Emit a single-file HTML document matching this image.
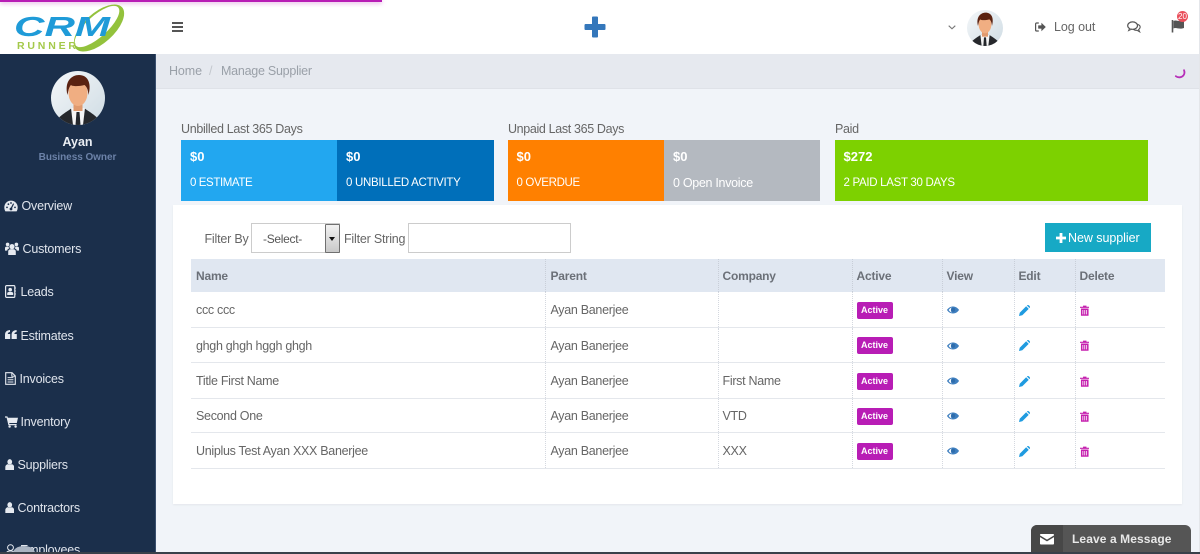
<!DOCTYPE html>
<html><head><meta charset="utf-8"><title>Manage Supplier</title>
<style>
*{box-sizing:border-box}
html,body{margin:0;padding:0;width:1200px;height:554px;overflow:hidden;background:#f1f4f9;font-family:"Liberation Sans",sans-serif;font-size:13px;color:#666}
.a{position:absolute}
.t{position:absolute;white-space:nowrap;line-height:16px}
#top{left:0;top:0;width:1200px;height:54px;background:#fff}
#prog{left:0;top:0;width:382px;height:2px;background:#b81db5;box-shadow:0 1px 4px rgba(184,29,181,.5)}
#side{left:0;top:54px;width:156px;height:498px;background:#1b2f4b;border-right:1px solid #3a4f6e;overflow:hidden}
#crumb{left:156px;top:54px;width:1044px;height:35px;background:#e6e9ef;border-bottom:1px solid #dfe2e8}
.nav{color:#dfe4ec;font-size:12.5px;letter-spacing:-.2px}
.lb{font-size:12.5px;letter-spacing:-.32px}
.k{position:absolute;top:140px;height:61px;color:#fff}
.k b{position:absolute;left:9px;top:9px;font-size:13px;line-height:16px}
.k span{position:absolute;left:9px;top:35px;font-size:11.5px;letter-spacing:-.3px;line-height:16px;white-space:nowrap}
#panel{left:173px;top:205px;width:1009px;height:299px;background:#fff;box-shadow:0 1px 2px rgba(0,0,0,.06)}
table{position:absolute;left:191px;top:259px;width:974px;border-collapse:collapse;table-layout:fixed;font-size:12.5px;letter-spacing:-.3px;color:#666}
th{height:33px;background:#e0e7f1;text-align:left;padding:0 4px;font-size:12px;letter-spacing:-.2px;color:#6b7078;border-left:1px dotted #c8ced8}
td{padding:2px 4px 0;border-bottom:1px solid #e4e7ec;border-left:1px dotted #d4d8df;white-space:nowrap}
th:nth-child(-n+2),td:nth-child(-n+2){padding-left:5px}
th:first-child,td:first-child{border-left:0}
.bd{display:block;width:36px;height:17px;line-height:17px;background:#b81db5;color:#fff;font-size:9px;letter-spacing:0;font-weight:bold;text-align:center;border-radius:2px}
td svg{display:block}
</style></head><body>
<svg width="0" height="0" style="position:absolute"><defs>
<clipPath id="c"><circle cx="27" cy="27" r="27"/></clipPath>
<linearGradient id="bg" x1="0" y1="0" x2="1" y2="1"><stop offset="0" stop-color="#f4f7f9"/><stop offset="1" stop-color="#cfdce4"/></linearGradient>
<symbol id="av" viewBox="0 0 54 54"><g clip-path="url(#c)">
<rect width="54" height="54" fill="url(#bg)"/>
<path d="M3 54 C6 46 14 42 21 37 L33 37 C40 42 48 46 51 54Z" fill="#26282c"/>
<path d="M20 37 L34 37 L32 54 L22 54Z" fill="#f5f5f5"/>
<path d="M25.5 41 L28.5 41 L29.5 54 L24.5 54Z" fill="#23262b"/>
<rect x="22.5" y="29" width="9" height="11" fill="#e09a6e"/>
<ellipse cx="27" cy="22" rx="9.5" ry="13" fill="#f0ae82"/>
<path d="M16.5 24 C13 10 21 4 28 4 C36 4 41 11 37.5 24 C37 18 35.5 15.5 33.5 14 C28 15.5 21 15.5 20 14 C18 16 17.5 19 16.5 24Z" fill="#5a2211"/>
</g></symbol>
<symbol id="user" viewBox="0 0 12 12" preserveAspectRatio="none"><circle cx="6" cy="3.2" r="3" fill="currentColor"/><path d="M.4 12V8.6C.4 7 2 6 3.6 5.6 4.4 6.5 7.6 6.5 8.4 5.6 10 6 11.6 7 11.6 8.6V12Z" fill="currentColor"/></symbol>
<symbol id="eye" viewBox="0 0 12 8"><path d="M0 4C2.8-.6 9.2-.6 12 4 9.2 8.6 2.8 8.6 0 4Z" fill="#3f7fbf"/><path d="M1.6 4C3 2.2 4 1.6 4.8 1.4 3.6 2.6 3.6 5.4 4.8 6.6 4 6.4 3 5.8 1.6 4Z" fill="#fff"/><circle cx="6.2" cy="3.8" r="2" fill="#2e6cab"/></symbol>
<symbol id="pen" viewBox="0 0 12 12"><path d="M0 12 .8 8.4 7.8 1.4 10.6 4.2 3.6 11.2ZM8.6.6C9.4-.2 10.2-.2 11 .6L11.4 1C12.2 1.8 12.2 2.6 11.4 3.4Z" fill="#1f9be0"/></symbol>
<symbol id="bin" viewBox="0 0 10 11"><path d="M3.2 1.6V.4H6.8V1.6H10V2.8H0V1.6ZM1 3.4H9V11H1Z" fill="#c51fae"/><path d="M3 5V9.6M5 5V9.6M7 5V9.6" stroke="#fff" stroke-width=".8"/></symbol>
<mask id="ring"><rect width="120" height="52" fill="#000"/><ellipse cx="91" cy="26" rx="31" ry="15" transform="rotate(-42 91 26)" fill="#fff"/><ellipse cx="89" cy="24.5" rx="28.5" ry="10.5" transform="rotate(-42 89 24.5)" fill="#000"/></mask>
</defs></svg>

<div class="a" id="top"></div>
<div class="a" id="prog"></div>

<svg class="a" style="left:8px;top:2px" width="120" height="52" viewBox="0 0 120 52">
<rect width="120" height="52" fill="#93c23c" mask="url(#ring)"/>
<text x="6" y="34" font-family="Liberation Sans" font-weight="bold" font-style="italic" font-size="28" fill="#1f9bd8" textLength="96" lengthAdjust="spacingAndGlyphs">CRM</text>
<text x="9" y="47" font-family="Liberation Sans" font-weight="bold" font-size="10.5" fill="#a4c94a" textLength="59" lengthAdjust="spacing">RUNNER</text>
</svg>

<div class="a" style="left:172px;top:22px;width:10.5px;height:2px;background:#555"></div>
<div class="a" style="left:172px;top:26px;width:10.5px;height:2px;background:#555"></div>
<div class="a" style="left:172px;top:30px;width:10.5px;height:2px;background:#555"></div>

<svg class="a" style="left:584px;top:16px" width="22" height="22" viewBox="0 0 22 22"><path d="M8 1.5C8 .8 8.6 .5 9 .5H13C13.5 .5 14 .9 14 1.5V8H20.5C21.2 8 21.5 8.6 21.5 9V13C21.5 13.5 21 14 20.5 14H14V20.5C14 21.2 13.4 21.5 13 21.5H9C8.5 21.5 8 21 8 20.5V14H1.5C.8 14 .5 13.4 .5 13V9C.5 8.5 1 8 1.5 8H8Z" fill="#3477bb"/></svg>

<svg class="a" style="left:948px;top:25px" width="8" height="5" viewBox="0 0 8 5"><path d="M.7.7 4 3.8 7.3.7" fill="none" stroke="#777" stroke-width="1.1"/></svg>
<svg class="a" style="left:967px;top:10px" width="36" height="36"><use href="#av" width="36" height="36"/></svg>
<svg class="a" style="left:1035px;top:22px" width="11" height="10" viewBox="0 0 11 10"><path d="M3.8 1H1.6C1 1 .6 1.4 .6 2V8C.6 8.6 1 9 1.6 9H3.8" fill="none" stroke="#555" stroke-width="1.2"/><path d="M3.2 3.4H6.4V.8L10.8 5 6.4 9.2V6.6H3.2Z" fill="#555"/></svg>
<span class="t" style="left:1054px;top:19px;font-size:12.5px;letter-spacing:-.05px;color:#666">Log out</span>
<svg class="a" style="left:1127px;top:21px" width="14" height="12" viewBox="0 0 14 12"><ellipse cx="5.6" cy="4.6" rx="4.9" ry="3.7" fill="#fff" stroke="#555" stroke-width="1.2"/><path d="M2.6 7.4 1.6 9.6 4.6 8.2" fill="#fff" stroke="#555" stroke-width="1"/><path d="M10.6 3.4C12.6 4 13.4 5.4 13 6.8 12.8 7.6 12.2 8.2 11.6 8.6L12.6 10.8 9.8 9.2C8.4 9.4 7 9 6.2 8.2" fill="none" stroke="#555" stroke-width="1.1"/></svg>
<svg class="a" style="left:1171px;top:19px" width="14" height="14" viewBox="0 0 14 14"><path d="M1.5 1V13.5" stroke="#555" stroke-width="1.6"/><path d="M2.5 2C5.5.5 8 3.4 13 1.6V9C8 10.8 5.5 8 2.5 9.4Z" fill="#555"/></svg>
<div class="a" style="left:1177px;top:11px;width:11px;height:11px;border-radius:50%;background:#ea4f5b;color:#fff;font-size:8px;line-height:11px;text-align:center">20</div>

<div class="a" id="side">
<svg class="a" style="left:51px;top:17px" width="54" height="54"><use href="#av" width="54" height="54"/></svg>
<span class="t" style="left:0;width:155px;text-align:center;top:80px;color:#e9edf3;font-weight:bold;font-size:12.5px">Ayan</span>
<span class="t" style="left:0;width:155px;text-align:center;top:96px;color:#6c82a8;font-weight:bold;font-size:10px;letter-spacing:-.05px">Business Owner</span>

<svg class="a" style="left:4px;top:146px;color:#e6eaf0" width="14" height="12" viewBox="0 0 14 12"><path d="M7 .6C3.2.6.3 3.6.3 7.4.3 8.8.7 10.2 1.4 11.4H12.6C13.3 10.2 13.7 8.8 13.7 7.4 13.7 3.6 10.8.6 7 .6Z" fill="currentColor"/><path d="M7 8.8 9.6 3.6" stroke="#1b2f4b" stroke-width="1.2"/><circle cx="7" cy="9" r="1.4" fill="#1b2f4b"/><circle cx="3" cy="7.4" r=".9" fill="#1b2f4b"/><circle cx="4.4" cy="4.2" r=".9" fill="#1b2f4b"/><circle cx="7" cy="3" r=".9" fill="#1b2f4b"/><circle cx="11" cy="7.4" r=".9" fill="#1b2f4b"/></svg>
<span class="t nav" style="left:21.5px;top:144px">Overview</span>

<svg class="a" style="left:4.5px;top:188px;color:#e6eaf0" width="14" height="13" viewBox="0 0 14 13"><circle cx="7" cy="4.6" r="2.6" fill="currentColor"/><circle cx="2.6" cy="2.4" r="1.8" fill="currentColor"/><circle cx="11.4" cy="2.4" r="1.8" fill="currentColor"/><path d="M3.2 13V9.4C3.2 8 4.2 7.4 5.2 7.2H8.8C9.8 7.4 10.8 8 10.8 9.4V13Z" fill="currentColor"/><path d="M0 8.6V6C0 5 .8 4.6 1.4 4.6H3.6C3.7 5.4 4 6 4.4 6.4 3.2 6.8 2.4 7.4 2.2 8.6ZM14 8.6V6C14 5 13.2 4.6 12.6 4.6H10.4C10.3 5.4 10 6 9.6 6.4 10.8 6.8 11.6 7.4 11.8 8.6Z" fill="currentColor"/></svg>
<span class="t nav" style="left:22.5px;top:187px">Customers</span>

<svg class="a" style="left:4.5px;top:230.5px;color:#e6eaf0" width="11" height="13" viewBox="0 0 11 13"><rect x=".6" y=".6" width="9.2" height="11.8" rx="1" fill="none" stroke="currentColor" stroke-width="1.2"/><circle cx="5.2" cy="4.7" r="1.8" fill="currentColor"/><path d="M2.2 10V8.4C2.2 7.4 3 7 3.8 7H6.6C7.4 7 8.2 7.4 8.2 8.4V10Z" fill="currentColor"/><path d="M10.4 3H11M10.4 6H11M10.4 9H11" stroke="currentColor"/></svg>
<span class="t nav" style="left:20.5px;top:229.5px">Leads</span>

<svg class="a" style="left:4.5px;top:276px;color:#e6eaf0" width="12" height="9" viewBox="0 0 12 9"><path d="M0 5C0 2 1.4.4 5 0V2C3.6 2.2 2.8 2.8 2.8 4H5.2V9H0ZM6.6 5C6.6 2 8 .4 11.6 0V2C10.2 2.2 9.4 2.8 9.4 4H11.8V9H6.6Z" fill="currentColor"/></svg>
<span class="t nav" style="left:20.5px;top:274px">Estimates</span>

<svg class="a" style="left:4.5px;top:318px;color:#e6eaf0" width="11" height="13" viewBox="0 0 11 13"><path d="M.7.7H7L10.3 4V12.3H.7Z" fill="none" stroke="currentColor" stroke-width="1.1"/><path d="M2.6 5.6H8.4M2.6 7.8H8.4M2.6 10H8.4M6.8.8V4.2H10.2" fill="none" stroke="currentColor"/></svg>
<span class="t nav" style="left:19.5px;top:317px">Invoices</span>

<svg class="a" style="left:4.5px;top:361.5px;color:#e6eaf0" width="13" height="12" viewBox="0 0 13 12"><path d="M0 .4H2.4L2.9 1.8H13L11.8 7H4.2L4.5 8H11.6V9.2H3.4L1.6 1.6H0Z" fill="currentColor"/><circle cx="4.6" cy="10.6" r="1.2" fill="currentColor"/><circle cx="10.6" cy="10.6" r="1.2" fill="currentColor"/></svg>
<span class="t nav" style="left:20.5px;top:359.5px">Inventory</span>

<svg class="a" style="left:4.5px;top:405px;color:#e6eaf0" width="9.5" height="11"><use href="#user" width="9.5" height="11"/></svg>
<span class="t nav" style="left:17.5px;top:402.5px">Suppliers</span>
<svg class="a" style="left:4.5px;top:448px;color:#e6eaf0" width="9.5" height="11"><use href="#user" width="9.5" height="11"/></svg>
<span class="t nav" style="left:17.5px;top:445.5px">Contractors</span>

<svg class="a" style="left:4.5px;top:490px;color:#e6eaf0" width="11" height="11" viewBox="0 0 11 11"><circle cx="5.5" cy="3.6" r="2.9" fill="none" stroke="currentColor"/><path d="M1 10.5C1 8 3 7 5.5 7S10 8 10 10.5" fill="none" stroke="currentColor"/></svg>
<span class="t nav" style="left:20px;top:488px">Employees</span>
<div class="a" style="left:13px;top:492px;width:22px;height:14px;border-radius:50%;background:#aab4c2"></div>
</div>

<div class="a" id="crumb"></div>
<span class="t lb" style="left:169px;top:63px;color:#9aa0a8;letter-spacing:-.1px">Home</span>
<span class="t" style="left:209px;top:63px;color:#c3c7cd;font-size:12.5px">/</span>
<span class="t lb" style="left:221px;top:63px;color:#9aa0a8;letter-spacing:-.25px">Manage Supplier</span>
<svg class="a" style="left:1173px;top:66px" width="15" height="14"><path d="M2.8 10.2C5.2 12 8.6 11.6 10.4 9.4 11.6 7.8 11.8 6 11 4.2" fill="none" stroke="#b62fb8" stroke-width="1.8" stroke-linecap="round"/></svg>

<span class="t lb" style="left:181px;top:121px">Unbilled Last 365 Days</span>
<span class="t lb" style="left:508px;top:121px;letter-spacing:-.35px">Unpaid Last 365 Days</span>
<span class="t lb" style="left:835px;top:121px">Paid</span>

<div class="k" style="left:181px;width:156px;background:#22a7f0"><b>$0</b><span style="letter-spacing:-.4px">0 ESTIMATE</span></div>
<div class="k" style="left:337px;width:157px;background:#006fba"><b>$0</b><span>0 UNBILLED ACTIVITY</span></div>
<div class="k" style="left:508px;width:156px;background:#ff8000"><b style="left:8.5px">$0</b><span style="left:8.5px;letter-spacing:-.35px">0 OVERDUE</span></div>
<div class="k" style="left:664px;width:156px;background:#b4b9c0"><b>$0</b><span style="font-size:12.5px;letter-spacing:-.3px">0 Open Invoice</span></div>
<div class="k" style="left:835px;width:313px;background:#7dd100"><b style="left:8.5px">$272</b><span style="left:8.5px">2 PAID LAST 30 DAYS</span></div>

<div class="a" id="panel"></div>

<span class="t lb" style="left:204.5px;top:231px;letter-spacing:-.2px">Filter By</span>
<div class="a" style="left:251px;top:223px;width:89px;height:30px;background:#fff;border:1px solid #ccc"></div>
<span class="t" style="left:263px;top:231px;font-size:12px;letter-spacing:-.3px;color:#555">-Select-</span>
<div class="a" style="left:325px;top:224px;width:15px;height:29px;background:linear-gradient(#f2f2f2,#c9c9c9);border:1px solid #707070;border-radius:1px"></div>
<div class="a" style="left:329px;top:237px;width:0;height:0;border-left:3.5px solid transparent;border-right:3.5px solid transparent;border-top:4px solid #111"></div>
<span class="t lb" style="left:344px;top:231px;letter-spacing:-.2px">Filter String</span>
<div class="a" style="left:408px;top:223px;width:163px;height:30px;background:#fff;border:1px solid #ccc"></div>
<div class="a" style="left:1045px;top:223px;width:106px;height:29px;background:#17a9c5"></div>
<svg class="a" style="left:1056px;top:233px" width="10" height="10" viewBox="0 0 10 10"><path d="M3.6 0H6.4V3.6H10V6.4H6.4V10H3.6V6.4H0V3.6H3.6Z" fill="#fff"/></svg>
<span class="t" style="left:1068px;top:230px;color:#fff;font-size:12.5px;letter-spacing:-.05px">New supplier</span>

<table>
<colgroup><col style="width:354px"><col style="width:173px"><col style="width:134px"><col style="width:90px"><col style="width:72px"><col style="width:61px"><col style="width:90px"></colgroup>
<tr><th>Name</th><th>Parent</th><th>Company</th><th>Active</th><th>View</th><th>Edit</th><th>Delete</th></tr>
<tr style="height:35px"><td>ccc ccc</td><td>Ayan Banerjee</td><td></td><td><span class="bd">Active</span></td><td><svg width="12" height="8"><use href="#eye" width="12" height="8"/></svg></td><td><svg width="11" height="11"><use href="#pen" width="11" height="11"/></svg></td><td><svg width="9.5" height="11"><use href="#bin" width="9.5" height="11"/></svg></td></tr>
<tr style="height:35px"><td>ghgh ghgh hggh ghgh</td><td>Ayan Banerjee</td><td></td><td><span class="bd">Active</span></td><td><svg width="12" height="8"><use href="#eye" width="12" height="8"/></svg></td><td><svg width="11" height="11"><use href="#pen" width="11" height="11"/></svg></td><td><svg width="9.5" height="11"><use href="#bin" width="9.5" height="11"/></svg></td></tr>
<tr style="height:36px"><td>Title First Name</td><td>Ayan Banerjee</td><td>First Name</td><td><span class="bd">Active</span></td><td><svg width="12" height="8"><use href="#eye" width="12" height="8"/></svg></td><td><svg width="11" height="11"><use href="#pen" width="11" height="11"/></svg></td><td><svg width="9.5" height="11"><use href="#bin" width="9.5" height="11"/></svg></td></tr>
<tr style="height:34px"><td>Second One</td><td>Ayan Banerjee</td><td>VTD</td><td><span class="bd">Active</span></td><td><svg width="12" height="8"><use href="#eye" width="12" height="8"/></svg></td><td><svg width="11" height="11"><use href="#pen" width="11" height="11"/></svg></td><td><svg width="9.5" height="11"><use href="#bin" width="9.5" height="11"/></svg></td></tr>
<tr style="height:36px"><td>Uniplus Test Ayan XXX Banerjee</td><td>Ayan Banerjee</td><td>XXX</td><td><span class="bd">Active</span></td><td><svg width="12" height="8"><use href="#eye" width="12" height="8"/></svg></td><td><svg width="11" height="11"><use href="#pen" width="11" height="11"/></svg></td><td><svg width="9.5" height="11"><use href="#bin" width="9.5" height="11"/></svg></td></tr>
</table>

<div class="a" style="left:1031px;top:525px;width:160px;height:27px;background:#555;border-radius:6px 6px 0 0;overflow:hidden"><div class="a" style="left:0;top:0;width:32px;height:27px;background:#474747"></div></div>
<svg class="a" style="left:1040px;top:534px" width="14" height="10.5" viewBox="0 0 16 12"><path d="M1 0H15C15.6 0 16 .4 16 1V1.6L8 6.4 0 1.6V1C0 .4.4 0 1 0ZM0 3.6 8 8.4 16 3.6V11C16 11.6 15.6 12 15 12H1C.4 12 0 11.6 0 11Z" fill="#fff"/></svg>
<span class="t" style="left:1072px;top:531px;color:#e8e8e8;font-weight:bold;font-size:12px;letter-spacing:.1px">Leave a Message</span>

<div class="a" style="left:0;top:552px;width:1200px;height:2px;background:#39404a"></div>
<div class="a" style="left:1199px;top:0;width:1px;height:552px;background:#e4e6ea"></div>
</body></html>
